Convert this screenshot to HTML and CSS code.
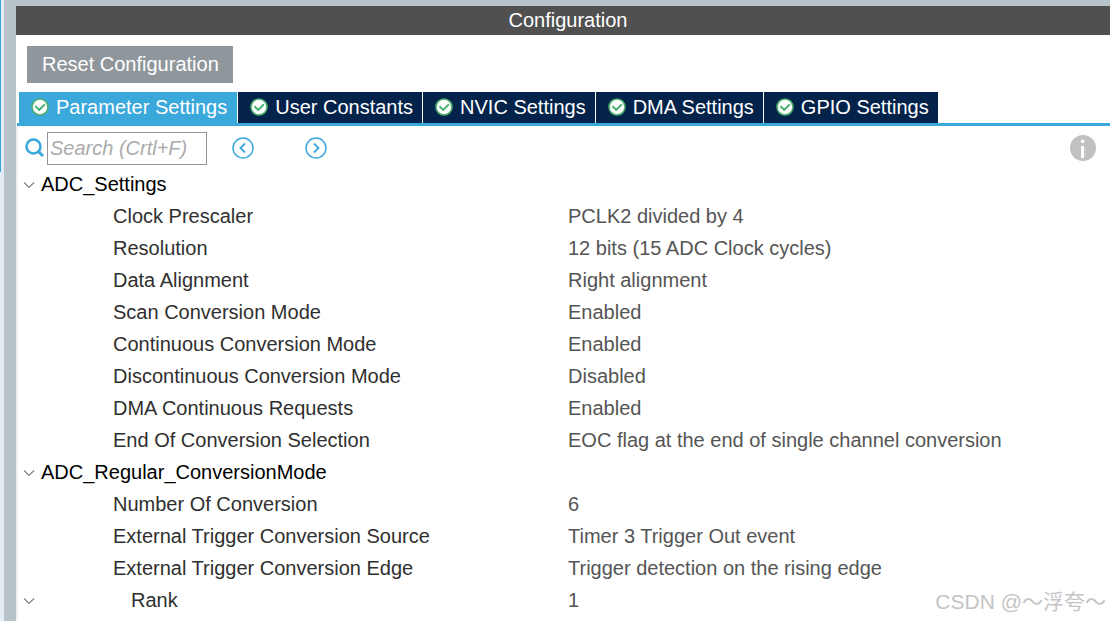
FILE: index.html
```html
<!DOCTYPE html>
<html lang="en">
<head>
  <meta charset="UTF-8">
  <meta name="viewport" content="width=device-width, initial-scale=1.0">
  <title>Configuration</title>
  <link rel="stylesheet" href="styles.css">
</head>
<body>
  <svg class="defs" width="0" height="0">
    <symbol id="check" viewBox="0 0 18 18">
      <circle cx="9" cy="9" r="8" fill="#fff" stroke="#4bae6e" stroke-width="1.6"/>
      <path d="M4.4 8.2 L8.2 12 L13.8 6.4" fill="none" stroke="#3fae68" stroke-width="1.9"/>
    </symbol>
    <symbol id="chevron" viewBox="0 0 12 12">
      <path d="M1 3.5 L6 8.5 L11 3.5" fill="none" stroke="#808080" stroke-width="1.1"/>
    </symbol>
  </svg>

  <div class="side"><div class="side-active"></div></div>
  <div class="splitter"></div>

  <main class="panel">
    <h1 class="title">Configuration</h1>

    <div class="actions">
      <button class="reset" type="button">Reset Configuration</button>
    </div>

    <div class="tabs" role="tablist">
      <button class="tab active" type="button" role="tab" aria-selected="true"><svg class="check"><use href="#check"/></svg>Parameter Settings</button>
      <button class="tab" type="button" role="tab"><svg class="check"><use href="#check"/></svg>User Constants</button>
      <button class="tab" type="button" role="tab"><svg class="check"><use href="#check"/></svg>NVIC Settings</button>
      <button class="tab" type="button" role="tab"><svg class="check"><use href="#check"/></svg>DMA Settings</button>
      <button class="tab" type="button" role="tab"><svg class="check"><use href="#check"/></svg>GPIO Settings</button>
    </div>

    <div class="tab-body">
      <div class="toolbar">
        <label class="search-label" for="search" aria-label="Search">
          <svg width="20" height="20" viewBox="0 0 20 20">
            <circle cx="8.5" cy="8.5" r="7" fill="none" stroke="#3ba8dc" stroke-width="2.6"/>
            <path d="M13 13 L18 18" stroke="#3ba8dc" stroke-width="3"/>
          </svg>
        </label>
        <input class="search" id="search" type="text" placeholder="Search (Crtl+F)">
        <button class="icon-btn prev" type="button" aria-label="Previous">
          <svg width="22" height="22" viewBox="0 0 22 22" fill="none" stroke="#3ba8dc">
            <circle cx="11" cy="11" r="10" stroke-width="1.5"/>
            <path d="M13 6.5 L8.5 11 L13 15.5" stroke-width="1.8"/>
          </svg>
        </button>
        <button class="icon-btn next" type="button" aria-label="Next">
          <svg width="22" height="22" viewBox="0 0 22 22" fill="none" stroke="#3ba8dc">
            <circle cx="11" cy="11" r="10" stroke-width="1.5"/>
            <path d="M9 6.5 L13.5 11 L9 15.5" stroke-width="1.8"/>
          </svg>
        </button>
        <button class="icon-btn info" type="button" aria-label="Information">
          <svg width="26" height="26" viewBox="0 0 26 26">
            <circle cx="13" cy="13" r="13" fill="#c1c1c1"/>
            <circle cx="12.6" cy="6.4" r="1.8" fill="#fff"/>
            <path d="M12.6 11 V23" stroke="#fff" stroke-width="3"/>
          </svg>
        </button>
      </div>

      <table class="params">
        <tbody>
          <tr class="group"><th colspan="2"><button class="toggle" type="button" aria-label="Collapse ADC_Settings"><svg><use href="#chevron"/></svg></button>ADC_Settings</th></tr>
          <tr><td>Clock Prescaler</td><td>PCLK2 divided by 4</td></tr>
          <tr><td>Resolution</td><td>12 bits (15 ADC Clock cycles)</td></tr>
          <tr><td>Data Alignment</td><td>Right alignment</td></tr>
          <tr><td>Scan Conversion Mode</td><td>Enabled</td></tr>
          <tr><td>Continuous Conversion Mode</td><td>Enabled</td></tr>
          <tr><td>Discontinuous Conversion Mode</td><td>Disabled</td></tr>
          <tr><td>DMA Continuous Requests</td><td>Enabled</td></tr>
          <tr><td>End Of Conversion Selection</td><td>EOC flag at the end of single channel conversion</td></tr>
        </tbody>
        <tbody>
          <tr class="group"><th colspan="2"><button class="toggle" type="button" aria-label="Collapse ADC_Regular_ConversionMode"><svg><use href="#chevron"/></svg></button>ADC_Regular_ConversionMode</th></tr>
          <tr><td>Number Of Conversion</td><td>6</td></tr>
          <tr><td>External Trigger Conversion Source</td><td>Timer 3 Trigger Out event</td></tr>
          <tr><td>External Trigger Conversion Edge</td><td>Trigger detection on the rising edge</td></tr>
          <tr class="rank"><td><button class="toggle" type="button" aria-label="Collapse Rank"><svg><use href="#chevron"/></svg></button>Rank</td><td>1</td></tr>
        </tbody>
      </table>
    </div>
  </main>

  <div class="watermark">CSDN @～浮夸～</div>
</body>
</html>
```

FILE: styles.css
```css
* {
  box-sizing: border-box;
}

body {
  display: flex;
  min-height: 100vh;
  margin: 0;
  font-family: "Liberation Sans", Arial, sans-serif;
  font-size: 20px;
  line-height: 24px;
  color: #2f2f2f;
  background-color: #fff;
}

button,
input {
  font: inherit;
}

button {
  padding: 0;
  border: none;
  background: none;
  cursor: pointer;
}

svg {
  display: block;
}

.defs {
  position: absolute;
}

/* left edge */
.side {
  flex: none;
  width: 4px;
  background-color: #e4edf6;
}

.side-active {
  width: 1px;
  height: 172px;
  background-color: #3ba8dc;
}

.splitter {
  flex: none;
  width: 12px;
  background-color: #b8c3c9;
}

.panel {
  display: flex;
  flex: 1;
  flex-direction: column;
  min-width: 0;
  border-top: 6px solid #b8c3c9;
}

.title {
  margin: 0;
  padding: 2px 0 3px 10px;
  font-size: 20px;
  font-weight: normal;
  line-height: 24px;
  text-align: center;
  color: #fff;
  background-color: #4f504f;
}

.actions {
  padding: 11px 11px 9px;
}

.reset {
  display: block;
  height: 37px;
  padding: 0 14px 2px 15px;
  color: #fff;
  background-color: #8f979d;
}

/* tabs */
.tabs {
  display: flex;
  gap: 1px;
  margin-left: 1px;
  padding-left: 2px;
  border-bottom: 3px solid #3ba8dc;
}

.tab {
  display: flex;
  align-items: center;
  gap: 7px;
  height: 31px;
  padding: 0 9px 2px 12px;
  color: #fff;
  background-color: #03234b;
}

.tab.active {
  padding-right: 10px;
  background-color: #3ba8dc;
}

.check {
  width: 18px;
  height: 18px;
}

.tab-body {
  flex: 1;
  border-left: 2px solid #f0f0f0;
}

/* search bar */
.toolbar {
  display: flex;
  align-items: center;
  padding: 6px 14px 3px 7px;
}

.search {
  width: 160px;
  height: 33px;
  margin-left: 2px;
  padding: 0 2px;
  border: 1px solid #8f979d;
}

.search::placeholder {
  font-style: italic;
  color: #ababab;
}

.search-label,
.icon-btn {
  padding-bottom: 2px;
}

.prev {
  margin-left: 25px;
}

.next {
  margin-left: 51px;
}

.info {
  margin-left: auto;
}

/* parameter tree */
.params {
  width: 100%;
  table-layout: fixed;
  border-collapse: collapse;
}

.params tr {
  height: 32px;
}

.params th,
.params td {
  padding: 0 0 0 4px;
  font-weight: normal;
  text-align: left;
  white-space: nowrap;
  color: #555;
}

.params td:first-child {
  padding-left: 95px;
  color: #2f2f2f;
}

.params .group th {
  padding-left: 5px;
  color: #000;
}

.params .rank td:first-child {
  padding-left: 5px;
}

.toggle {
  width: 12px;
  margin-right: 6px;
  padding-bottom: 2px;
  vertical-align: middle;
}

.toggle svg {
  width: 12px;
  height: 12px;
}

.rank .toggle {
  margin-right: 96px;
}

.watermark {
  position: absolute;
  right: 4px;
  bottom: 7px;
  font-family: "Liberation Sans", "Noto Sans CJK SC", sans-serif;
  font-size: 21px;
  color: #c4c4c4;
  pointer-events: none;
}
```
